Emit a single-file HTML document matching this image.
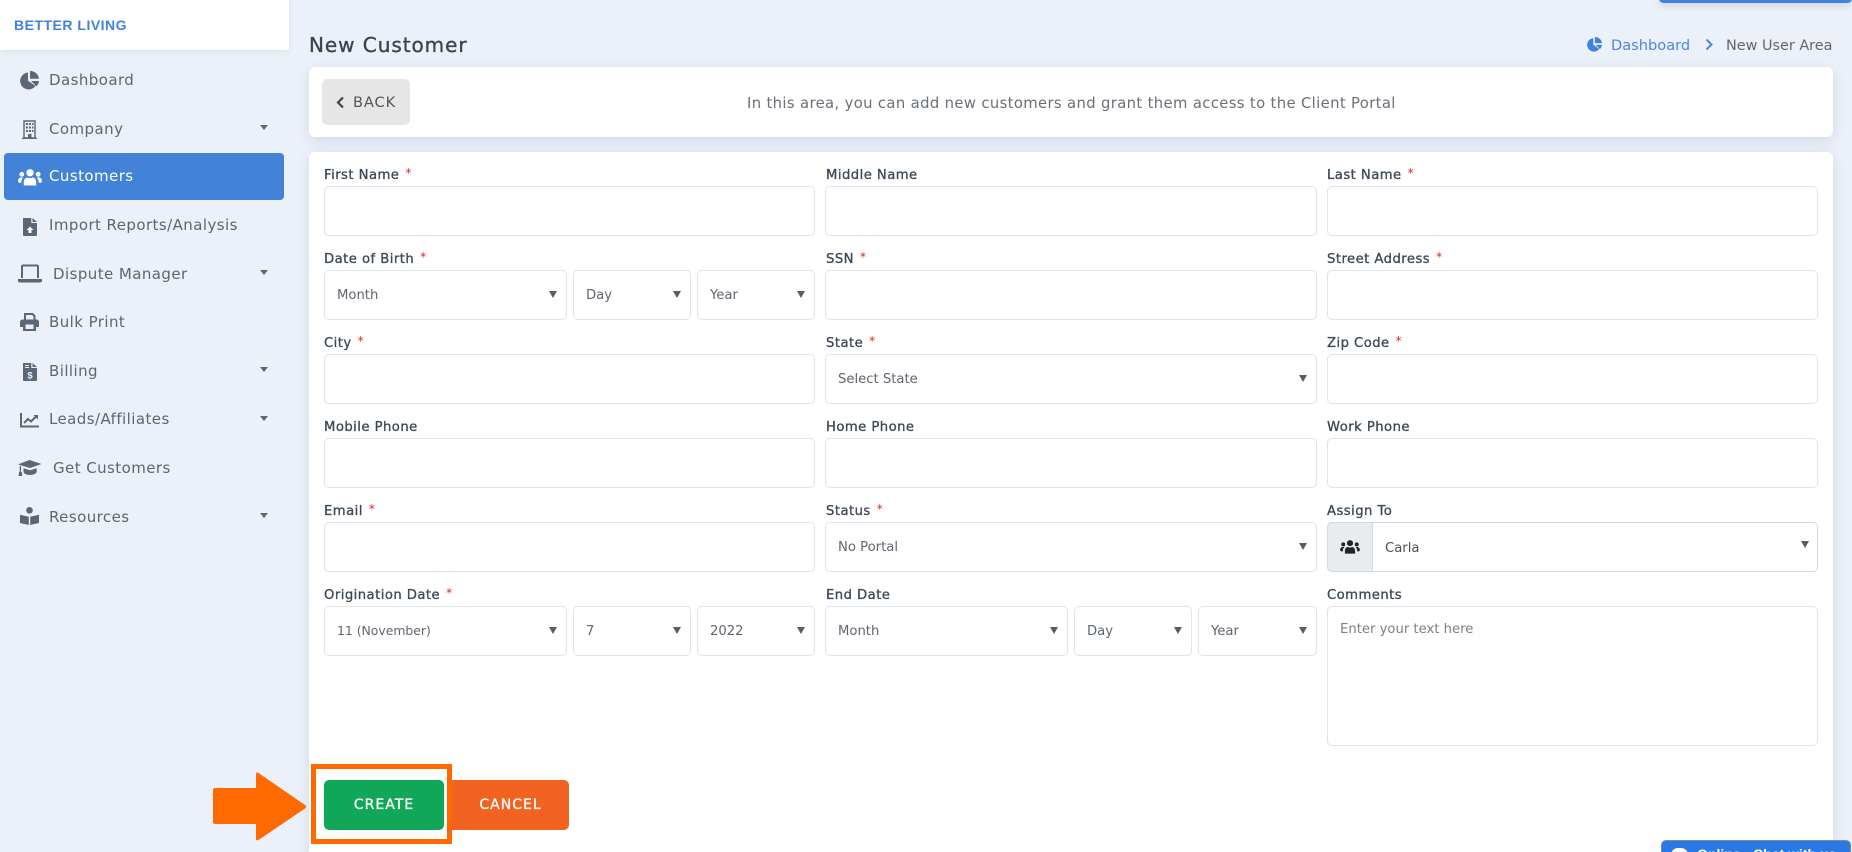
<!DOCTYPE html>
<html><head><meta charset="utf-8"><title>New Customer</title>
<style>
html,body{margin:0;padding:0;width:1852px;height:852px;overflow:hidden;background:#ecf1f9}
body{position:relative;font-family:"DejaVu Sans","Liberation Sans",sans-serif}
.a,.t,.f,.l,.s,.m,svg{position:absolute}
.t,.l,.s,.m{white-space:nowrap;line-height:20px}
.m{left:49px;font-size:15px;color:#5b6676;letter-spacing:.43px;margin-top:1px}
.c{position:absolute;left:260px;width:0;height:0;margin-top:1px;border-left:4.5px solid transparent;border-right:4.5px solid transparent;border-top:5px solid #5b6676}
.l{font-size:13.2px;color:#3c4858;-webkit-text-stroke:.3px #3c4858;letter-spacing:.45px;margin-top:2px}
.l b{color:#e8202a;font-weight:400;font-size:12px;line-height:0;margin-left:6px;-webkit-text-stroke:0;position:relative;top:-2px}
.f{box-sizing:border-box;height:50px;border:1px solid #dfe3e8;border-radius:5px;background:#fff}
.s{font-size:13.2px;color:#5f6670;margin-top:2px}
.r{position:absolute;width:0;height:0;margin-left:1px;border-left:4px solid transparent;border-right:4px solid transparent;border-top:7px solid #5c5c5c}
.card{position:absolute;background:#fff;border-radius:6px;box-shadow:0 4px 14px rgba(90,110,150,.18)}
</style></head><body>

<!-- top-right blue bar -->
<div class="a" style="left:1659px;top:-6px;width:193px;height:9px;background:#4282d8;border-radius:5px;box-shadow:0 2px 8px rgba(90,110,150,.25)"></div>

<!-- sidebar header -->
<div class="a" style="left:0;top:0;width:289px;height:50px;background:#fff;box-shadow:0 2px 6px rgba(90,110,150,.12)"></div>
<div class="t" style="left:14px;top:15px;font-weight:700;color:#3f82e0;font-family:'Liberation Sans',sans-serif;letter-spacing:.5px;font-size:14px">BETTER LIVING</div>

<!-- active -->
<div class="a" style="left:4px;top:153px;width:280px;height:47px;background:#4282d8;border-radius:4px"></div>

<!-- icons -->
<svg style="left:20px;top:71px" width="19" height="19" viewBox="0 0 19 19"><path fill="#5b6676" d="M8 1.500A8.500 8.500 0 1 0 15.500 15L8 9.800z"/><path fill="#5b6676" d="M10 0a8.800 8.800 0 0 1 9 7.800h-9z"/><path fill="#5b6676" d="M11 10h8a8.600 8.600 0 0 1-2.600 5.400z"/></svg>
<svg style="left:21px;top:120px" width="17" height="19" viewBox="0 0 17 19"><path fill="none" stroke="#5b6676" stroke-width="1.400" d="M3 1h11v17H3zM1 18.300h15"/><path fill="#5b6676" d="M5 3h2v2H5zM8 3h2v2H8zM11 3h1.500v2H11zM5 6.500h2v2H5zM8 6.500h2v2H8zM11 6.500h1.500v2H11zM5 10h2v2H5zM8 10h2v2H8zM11 10h1.500v2H11zM7 14h3.500v4H7z"/></svg>
<svg style="left:18px;top:169px" width="24" height="17" viewBox="0 0 24 17"><g fill="#fff"><circle cx="12" cy="3.800" r="3.700"/><path d="M5.800 16.500v-3.300c0-3 2-4.700 3.600-4.700 1.600.8 3.600.8 5.200 0 1.600 0 3.600 1.700 3.600 4.700v3.300z"/><circle cx="3.800" cy="5.300" r="2.400"/><circle cx="20.200" cy="5.300" r="2.400"/><path d="M0 12.500c0-2.500 1.300-4 2.800-4h2.600c-1.200 1-2 2.500-2.100 4.500v.8H1zM24 12.500c0-2.500-1.300-4-2.800-4h-2.600c1.200 1 2 2.500 2.100 4.500v.8H23z"/></g></svg>
<svg style="left:23px;top:217px" width="14" height="19" viewBox="0 0 14 19"><path fill="#5b6676" d="M0 1h8.300v5H14v12a1 1 0 0 1-1 1H1a1 1 0 0 1-1-1z"/><path fill="#5b6676" d="M9.500 1l4.500 4H9.500z"/><path fill="#fff" d="M7 9.500l3.500 3.500H8.500v3h-3v-3H3.500z"/></svg>
<svg style="left:18px;top:264px" width="24" height="19" viewBox="0 0 24 19"><path fill="none" stroke="#5b6676" stroke-width="2" d="M4 14V2.500a1 1 0 0 1 1-1h14a1 1 0 0 1 1 1V14"/><path fill="#5b6676" d="M0 15h24v1.500a2 2 0 0 1-2 2H2a2 2 0 0 1-2-2z"/></svg>
<svg style="left:20px;top:313px" width="19" height="18" viewBox="0 0 19 18"><path fill="#5b6676" d="M4 0h9l2.500 2.500V7h-2V3.500L12 2H6v5H4zM2.500 6.500h14A2.500 2.500 0 0 1 19 9v5h-3v4H3v-4H0V9a2.500 2.500 0 0 1 2.500-2.500z"/><path fill="#ecf1f9" d="M5.500 11.500h8V16h-8z"/></svg>
<svg style="left:23px;top:362px" width="14" height="19" viewBox="0 0 14 19"><path fill="#5b6676" d="M0 1h8.300v5H14v12a1 1 0 0 1-1 1H1a1 1 0 0 1-1-1z"/><path fill="#5b6676" d="M9.500 1l4.500 4H9.500z"/><path fill="#ecf1f9" d="M2 3h4v1H2zM2 5h4v1H2z"/><text x="7" y="16.500" font-size="9.500" font-family="Liberation Sans" font-weight="700" text-anchor="middle" fill="#ecf1f9">$</text></svg>
<svg style="left:20px;top:412px" width="19" height="16" viewBox="0 0 19 16"><path fill="none" stroke="#5b6676" stroke-width="2" d="M1 1v13.500h18"/><path fill="none" stroke="#5b6676" stroke-width="2" d="M4 11l4-4 3 2.500 5-5"/><path fill="#5b6676" d="M13.500 3H18v4.500z"/></svg>
<svg style="left:18px;top:460px" width="24" height="16" viewBox="0 0 24 16"><path fill="#5b6676" d="M11.500 0L23.500 4 12 8 1 4.800c-.5-.1-.5-.7 0-.8zM5.500 8.300L12 10.300 18.700 8.300V11.500c0 2-3.300 3.500-6.800 3.500s-6.400-1.500-6.400-3.500z"/><path fill="#5b6676" d="M1.700 6h1.300v6H3.800l.4 4H.6l.5-4h.6z"/></svg>
<svg style="left:20px;top:507px" width="19" height="18" viewBox="0 0 19 18"><circle cx="9.500" cy="3.300" r="3.300" fill="#5b6676"/><path fill="#5b6676" d="M0 7.800l8.800 2V18L0 16zM19 7.800l-8.800 2V18L19 16z"/></svg>

<!-- menu -->
<div class="m" style="top:69px">Dashboard</div>
<div class="m" style="top:118px">Company</div>
<div class="m" style="top:165px;color:#fff">Customers</div>
<div class="m" style="top:214px">Import Reports/Analysis</div>
<div class="m" style="top:263px;left:53px">Dispute Manager</div>
<div class="m" style="top:311px">Bulk Print</div>
<div class="m" style="top:360px">Billing</div>
<div class="m" style="top:408px">Leads/Affiliates</div>
<div class="m" style="top:457px;left:53px">Get Customers</div>
<div class="m" style="top:506px">Resources</div>
<div class="c" style="top:124px"></div><div class="c" style="top:269px"></div><div class="c" style="top:366px"></div><div class="c" style="top:415px"></div><div class="c" style="top:512px"></div>

<!-- title and breadcrumb -->
<div class="t" style="left:309px;top:35px;font-size:20px;letter-spacing:.95px;color:#3a4350;-webkit-text-stroke:.35px #3a4350">New Customer</div>
<svg style="left:1587px;top:37px" width="15" height="15" viewBox="0 0 19 19"><path fill="#3f82e0" d="M8 1.500A8.500 8.500 0 1 0 15.500 15L8 9.800z"/><path fill="#3f82e0" d="M10 0a8.800 8.800 0 0 1 9 7.800h-9z"/><path fill="#3f82e0" d="M11 10h8a8.600 8.600 0 0 1-2.600 5.400z"/></svg>
<div class="t" style="left:1611px;top:36px;font-size:14.600px;color:#4a86e8">Dashboard</div>
<svg style="left:1705px;top:38px" width="9" height="13" viewBox="0 0 9 13"><path fill="none" stroke="#4a86e8" stroke-width="2" d="M1.500 1.500l5 5-5 5"/></svg>
<div class="t" style="left:1726px;top:36px;font-size:14.400px;color:#666">New User Area</div>

<!-- top card -->
<div class="card" style="left:309px;top:67px;width:1524px;height:70px"></div>
<div class="a" style="left:322px;top:79px;width:88px;height:46px;background:#e6e6e6;border-radius:5px"></div>
<svg style="left:336px;top:96px" width="9" height="13" viewBox="0 0 9 13"><path fill="none" stroke="#444" stroke-width="2.200" d="M7 1.500l-5 5 5 5"/></svg>
<div class="t" style="left:353px;top:93px;font-size:14.600px;letter-spacing:.9px;color:#555">BACK</div>
<div class="t" style="left:747px;top:94px;font-size:14.800px;letter-spacing:.36px;color:#6a7078">In this area, you can add new customers and grant them access to the Client Portal</div>

<!-- main card -->
<div class="card" style="left:309px;top:152px;width:1524px;height:760px"></div>

<!-- row 1 -->
<div class="l" style="left:324px;top:164px">First Name<b>*</b></div>
<div class="l" style="left:826px;top:164px">Middle Name</div>
<div class="l" style="left:1327px;top:164px">Last Name<b>*</b></div>
<div class="f" style="left:324px;top:186px;width:491px"></div>
<div class="f" style="left:825px;top:186px;width:492px"></div>
<div class="f" style="left:1327px;top:186px;width:491px"></div>

<!-- row 2 -->
<div class="l" style="left:324px;top:248px">Date of Birth<b>*</b></div>
<div class="l" style="left:826px;top:248px">SSN<b>*</b></div>
<div class="l" style="left:1327px;top:248px">Street Address<b>*</b></div>
<div class="f" style="left:324px;top:270px;width:243px"></div>
<div class="f" style="left:573px;top:270px;width:118px"></div>
<div class="f" style="left:697px;top:270px;width:118px"></div>
<div class="f" style="left:825px;top:270px;width:492px"></div>
<div class="f" style="left:1327px;top:270px;width:491px"></div>
<div class="s" style="left:337px;top:284px">Month</div><div class="r" style="left:548px;top:291px"></div>
<div class="s" style="left:586px;top:284px">Day</div><div class="r" style="left:672px;top:291px"></div>
<div class="s" style="left:710px;top:284px">Year</div><div class="r" style="left:796px;top:291px"></div>

<!-- row 3 -->
<div class="l" style="left:324px;top:332px">City<b>*</b></div>
<div class="l" style="left:826px;top:332px">State<b>*</b></div>
<div class="l" style="left:1327px;top:332px">Zip Code<b>*</b></div>
<div class="f" style="left:324px;top:354px;width:491px"></div>
<div class="f" style="left:825px;top:354px;width:492px"></div>
<div class="f" style="left:1327px;top:354px;width:491px"></div>
<div class="s" style="left:838px;top:368px">Select State</div><div class="r" style="left:1298px;top:375px"></div>

<!-- row 4 -->
<div class="l" style="left:324px;top:416px">Mobile Phone</div>
<div class="l" style="left:826px;top:416px">Home Phone</div>
<div class="l" style="left:1327px;top:416px">Work Phone</div>
<div class="f" style="left:324px;top:438px;width:491px"></div>
<div class="f" style="left:825px;top:438px;width:492px"></div>
<div class="f" style="left:1327px;top:438px;width:491px"></div>

<!-- row 5 -->
<div class="l" style="left:324px;top:500px">Email<b>*</b></div>
<div class="l" style="left:826px;top:500px">Status<b>*</b></div>
<div class="l" style="left:1327px;top:500px">Assign To</div>
<div class="f" style="left:324px;top:522px;width:491px"></div>
<div class="f" style="left:825px;top:522px;width:492px"></div>
<div class="f" style="left:1327px;top:522px;width:491px;border-color:#d3d8e0"></div>
<div class="s" style="left:838px;top:536px">No Portal</div><div class="r" style="left:1298px;top:543px"></div>
<div class="a" style="left:1327px;top:522px;width:46px;height:50px;box-sizing:border-box;background:#e9ecef;border:1px solid #d3d8e0;border-radius:5px 0 0 5px"></div>
<svg style="left:1340px;top:540px" width="20" height="14" viewBox="0 0 24 17"><g fill="#212529"><circle cx="12" cy="3.800" r="3.700"/><path d="M5.800 16.500v-3.300c0-3 2-4.700 3.600-4.700 1.600.8 3.600.8 5.200 0 1.600 0 3.600 1.700 3.600 4.700v3.300z"/><circle cx="3.800" cy="5.300" r="2.400"/><circle cx="20.200" cy="5.300" r="2.400"/><path d="M0 12.500c0-2.500 1.300-4 2.800-4h2.600c-1.200 1-2 2.500-2.100 4.500v.8H1zM24 12.500c0-2.500-1.300-4-2.800-4h-2.600c1.200 1 2 2.500 2.100 4.500v.8H23z"/></g></svg>
<div class="s" style="left:1385px;top:537px;color:#495057">Carla</div><div class="r" style="left:1800px;top:541px"></div>

<!-- row 6 -->
<div class="l" style="left:324px;top:584px">Origination Date<b>*</b></div>
<div class="l" style="left:826px;top:584px">End Date</div>
<div class="l" style="left:1327px;top:584px">Comments</div>
<div class="f" style="left:324px;top:606px;width:243px"></div>
<div class="f" style="left:573px;top:606px;width:118px"></div>
<div class="f" style="left:697px;top:606px;width:118px"></div>
<div class="f" style="left:825px;top:606px;width:243px"></div>
<div class="f" style="left:1074px;top:606px;width:118px"></div>
<div class="f" style="left:1198px;top:606px;width:119px"></div>
<div class="f" style="left:1327px;top:606px;width:491px;height:140px"></div>
<div class="s" style="left:337px;top:619px;font-size:12.400px">11 (November)</div><div class="r" style="left:548px;top:627px"></div>
<div class="s" style="left:586px;top:620px">7</div><div class="r" style="left:672px;top:627px"></div>
<div class="s" style="left:710px;top:620px">2022</div><div class="r" style="left:796px;top:627px"></div>
<div class="s" style="left:838px;top:620px">Month</div><div class="r" style="left:1049px;top:627px"></div>
<div class="s" style="left:1087px;top:620px">Day</div><div class="r" style="left:1173px;top:627px"></div>
<div class="s" style="left:1211px;top:620px">Year</div><div class="r" style="left:1298px;top:627px"></div>
<div class="s" style="left:1340px;top:618px;color:#7a8088">Enter your text here</div>

<!-- buttons -->
<div class="a" style="left:452px;top:780px;width:117px;height:50px;background:#f26322;border-radius:0 5px 5px 0"></div>
<div class="a" style="left:311px;top:764px;width:141px;height:80px;box-sizing:border-box;border:5px solid #ff6a00"></div>
<div class="a" style="left:324px;top:780px;width:120px;height:50px;background:#10a858;border-radius:5px"></div>
<div class="t" style="left:324px;top:795px;width:120px;text-align:center;font-size:14px;letter-spacing:1px;color:#fff;-webkit-text-stroke:.3px #fff">CREATE</div>
<div class="t" style="left:452px;top:795px;width:117px;text-align:center;font-size:14px;letter-spacing:1px;color:#fff;-webkit-text-stroke:.3px #fff">CANCEL</div>

<!-- arrow -->
<svg style="left:213px;top:772px" width="93" height="69" viewBox="0 0 93 69"><path fill="#ff6a00" d="M2 16h41V2c0-1.500 1.500-2 2.500-1L92 33c1.500 1 1.500 2.500 0 3.500L45.500 68c-1 .8-2.500.3-2.500-1V52H2a2 2 0 0 1-2-2V18a2 2 0 0 1 2-2z"/></svg>

<!-- chat widget -->
<div class="a" style="left:1661px;top:840px;width:190px;height:30px;background:#2a78e4;border:1px solid #7a8aa5;border-bottom:0;box-sizing:border-box;border-radius:5px 5px 0 0;overflow:hidden">
<div class="a" style="left:9px;top:7px;width:17px;height:14px;background:#fff;border-radius:7px"></div>
<div class="t" style="left:35px;top:3px;font-size:14px;font-weight:700;color:#fff;font-family:'Liberation Sans',sans-serif">Online - Chat with us</div>
</div>
</body></html>
